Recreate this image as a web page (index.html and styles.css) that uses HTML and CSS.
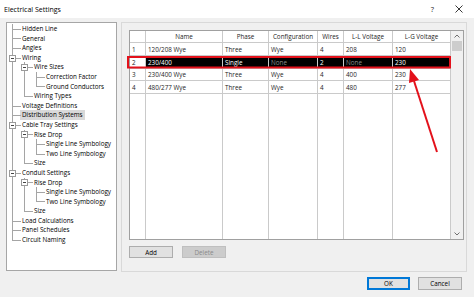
FILE: index.html
```html
<!DOCTYPE html>
<html>
<head>
<meta charset="utf-8">
<title>Electrical Settings</title>
<link rel="stylesheet" href="styles.css">
</head>
<body>
<div class="titlebar">
  <span class="title">Electrical Settings</span>
  <span class="tb-btns">
    <span class="help">?</span>
    <svg class="close" width="8" height="8" viewBox="0 0 8 8"><path d="M0.5 0.5L7.5 7.5M7.5 0.5L0.5 7.5" stroke="#222" stroke-width="0.9" fill="none"/></svg>
  </span>
</div>
<div class="main">
  <div class="tree">
    <div class="tn"><i class="g t"></i><span class="lbl">Hidden Line</span></div>
    <div class="tn"><i class="g t"></i><span class="lbl">General</span></div>
    <div class="tn"><i class="g t"></i><span class="lbl">Angles</span></div>
    <div class="tn"><i class="g t"><b class="box"></b></i><span class="lbl">Wiring</span></div>
    <div class="tn"><i class="g v"></i><i class="g t"><b class="box"></b></i><span class="lbl">Wire Sizes</span></div>
    <div class="tn"><i class="g v"></i><i class="g v"></i><i class="g t"></i><span class="lbl">Correction Factor</span></div>
    <div class="tn"><i class="g v"></i><i class="g v"></i><i class="g e"></i><span class="lbl">Ground Conductors</span></div>
    <div class="tn"><i class="g v"></i><i class="g e"></i><span class="lbl">Wiring Types</span></div>
    <div class="tn"><i class="g t"></i><span class="lbl">Voltage Definitions</span></div>
    <div class="tn"><i class="g t"></i><span class="lbl sel">Distribution Systems</span></div>
    <div class="tn"><i class="g t"><b class="box"></b></i><span class="lbl">Cable Tray Settings</span></div>
    <div class="tn"><i class="g v"></i><i class="g t"><b class="box"></b></i><span class="lbl">Rise Drop</span></div>
    <div class="tn"><i class="g v"></i><i class="g v"></i><i class="g t"></i><span class="lbl">Single Line Symbology</span></div>
    <div class="tn"><i class="g v"></i><i class="g v"></i><i class="g e"></i><span class="lbl">Two Line Symbology</span></div>
    <div class="tn"><i class="g v"></i><i class="g e"></i><span class="lbl">Size</span></div>
    <div class="tn"><i class="g t"><b class="box"></b></i><span class="lbl">Conduit Settings</span></div>
    <div class="tn"><i class="g v"></i><i class="g t"><b class="box"></b></i><span class="lbl">Rise Drop</span></div>
    <div class="tn"><i class="g v"></i><i class="g v"></i><i class="g t"></i><span class="lbl">Single Line Symbology</span></div>
    <div class="tn"><i class="g v"></i><i class="g v"></i><i class="g e"></i><span class="lbl">Two Line Symbology</span></div>
    <div class="tn"><i class="g v"></i><i class="g e"></i><span class="lbl">Size</span></div>
    <div class="tn"><i class="g t"></i><span class="lbl">Load Calculations</span></div>
    <div class="tn"><i class="g t"></i><span class="lbl">Panel Schedules</span></div>
    <div class="tn"><i class="g e"></i><span class="lbl">Circuit Naming</span></div>
  </div>
  <div class="panel">
    <div class="grid">
      <div class="tbl">
        <div class="c h"></div><div class="c h">Name</div><div class="c h">Phase</div><div class="c h">Configuration</div><div class="c h">Wires</div><div class="c h">L-L Voltage</div><div class="c h">L-G Voltage</div>

        <div class="c">1</div><div class="c">120/208 Wye</div><div class="c">Three</div><div class="c">Wye</div><div class="c">4</div><div class="c">208</div><div class="c">120</div>

        <div class="c">2</div><div class="c s">230/400</div><div class="c s">Single</div><div class="c s dim">None</div><div class="c s">2</div><div class="c s dim">None</div><div class="c s">230</div>

        <div class="c">3</div><div class="c">230/400 Wye</div><div class="c">Three</div><div class="c">Wye</div><div class="c">4</div><div class="c">400</div><div class="c">230</div>

        <div class="c">4</div><div class="c">480/277 Wye</div><div class="c">Three</div><div class="c">Wye</div><div class="c">4</div><div class="c">480</div><div class="c">277</div>

        <div class="c f"></div><div class="c f"></div><div class="c f"></div><div class="c f"></div><div class="c f"></div><div class="c f"></div><div class="c f"></div>
      </div>
      <div class="vs">
        <div class="vs-btn"><svg width="6" height="4" viewBox="0 0 6 4"><path d="M0.5 3.5L3 1L5.5 3.5" stroke="#606060" fill="none" stroke-width="0.9"/></svg></div>
        <div class="thumb"></div>
        <div class="track"></div>
        <div class="vs-btn"><svg width="6" height="4" viewBox="0 0 6 4"><path d="M0.5 0.5L3 3L5.5 0.5" stroke="#606060" fill="none" stroke-width="0.9"/></svg></div>
      </div>
    </div>
    <div class="actions">
      <button class="btn">Add</button>
      <button class="btn dis">Delete</button>
    </div>
  </div>
</div>
<div class="footer">
  <button class="btn fb ok">OK</button>
  <button class="btn fb">Cancel</button>
</div>
<svg class="annot" width="474" height="297" viewBox="0 0 474 297">
  <rect x="128" y="57" width="322" height="10.5" fill="none" stroke="#e3111b" stroke-width="2"/>
  <line x1="437" y1="152" x2="414" y2="81" stroke="#e3111b" stroke-width="2"/>
  <polygon points="410,69 419,80 409,83" fill="#e3111b"/>
</svg>
</body>
</html>
```

FILE: styles.css
```css
* { box-sizing: border-box; margin: 0; padding: 0; }
html, body { width: 474px; height: 297px; overflow: hidden; }
body {
  background: #f0f0f0;
  font-family: "Open Sans", "Noto Sans", sans-serif;
  font-size: 6.3px;
  color: #000;
  position: relative;
}
.titlebar {
  height: 18px;
  background: #fff;
  display: flex;
  align-items: center;
  justify-content: space-between;
  padding: 0 11px 0 4px;
}
.title { font-size: 7px; }
.tb-btns { display: flex; align-items: center; gap: 21px; }
.help { font-size: 7.5px; color: #222; }
.close { display: block; }

.main { display: flex; gap: 4px; padding: 4px 0 0 6px; }

.tree {
  width: 111px;
  height: 249px;
  background: #fff;
  border: 1px solid #a6a6a6;
  padding-top: 1px;
}
.tn { display: flex; height: 9.6px; }
.g { position: relative; width: 12px; flex: none; display: block; }
.g::before, .g::after { content: ""; position: absolute; background: #a5a5a5; }
.g.v::before, .g.t::before { left: 5px; top: 0; bottom: 0; width: 1px; }
.g.e::before { left: 5px; top: 0; height: 50%; width: 1px; }
.g.t::after, .g.e::after { left: 5px; top: 50%; width: 9px; height: 1px; }
.g.v::after { display: none; }
.box {
  position: absolute;
  left: 2px;
  top: calc(50% - 3px);
  width: 7px;
  height: 7px;
  border: 1px solid #9a9a9a;
  background: #fff;
  z-index: 1;
}
.box::after {
  content: "";
  position: absolute;
  left: 1px;
  top: 2px;
  width: 3px;
  height: 1px;
  background: #444;
}
.lbl { margin-left: 1px; padding: 0 2px; line-height: 9.6px; white-space: nowrap; }
.lbl.sel { background: #d9d9d9; }

.panel {
  width: 346px;
  height: 250px;
  border: 1px solid #d9d9d9;
  padding: 7px 0 0 7px;
}
.grid {
  display: flex;
  width: 335px;
  height: 210px;
  border: 1px solid #a0a0a0;
  background: #fff;
}
.tbl {
  display: grid;
  grid-template-columns: 16px 77px 46px 49px 26px 49px 58px;
  grid-template-rows: 12px 13px 13px 12px 13px 1fr;
  width: 321px;
}
.c {
  border-right: 1px solid #cacaca;
  border-bottom: 1px solid #cacaca;
  padding-left: 2px;
  white-space: nowrap;
  overflow: hidden;
  display: flex;
  align-items: center;
  color: #1e1e1e;
}
.c.h { justify-content: center; padding-left: 0; }
.c.s { background: #000; color: #fff; }
.c.s.dim { color: #8c8c8c; }
.c.f { border-bottom: none; }

.vs { width: 12px; display: flex; flex-direction: column; background: #f0f0f0; }
.vs-btn { height: 10px; display: flex; align-items: center; justify-content: center; }
.vs-btn svg { display: block; }
.thumb { height: 10px; margin: 0 1px; background: #cdcdcd; }
.track { flex: 1; }

.actions { display: flex; gap: 9px; margin-top: 6px; }
.btn {
  width: 44px;
  height: 12px;
  border: 1px solid #adadad;
  background: #e1e1e1;
  font-family: inherit;
  font-size: 6.3px;
  color: #000;
}
.btn.dis { background: #cccccc; border-color: #bfbfbf; color: #8a8a8a; }

.footer { display: flex; justify-content: flex-end; gap: 8px; padding: 5px 12px 0 0; }
.btn.fb { height: 13px; }
.btn.ok { width: 43px; border-color: #0078d7; box-shadow: inset 0 0 0 1px #0078d7; }

.annot { position: absolute; left: 0; top: 0; pointer-events: none; }
```
